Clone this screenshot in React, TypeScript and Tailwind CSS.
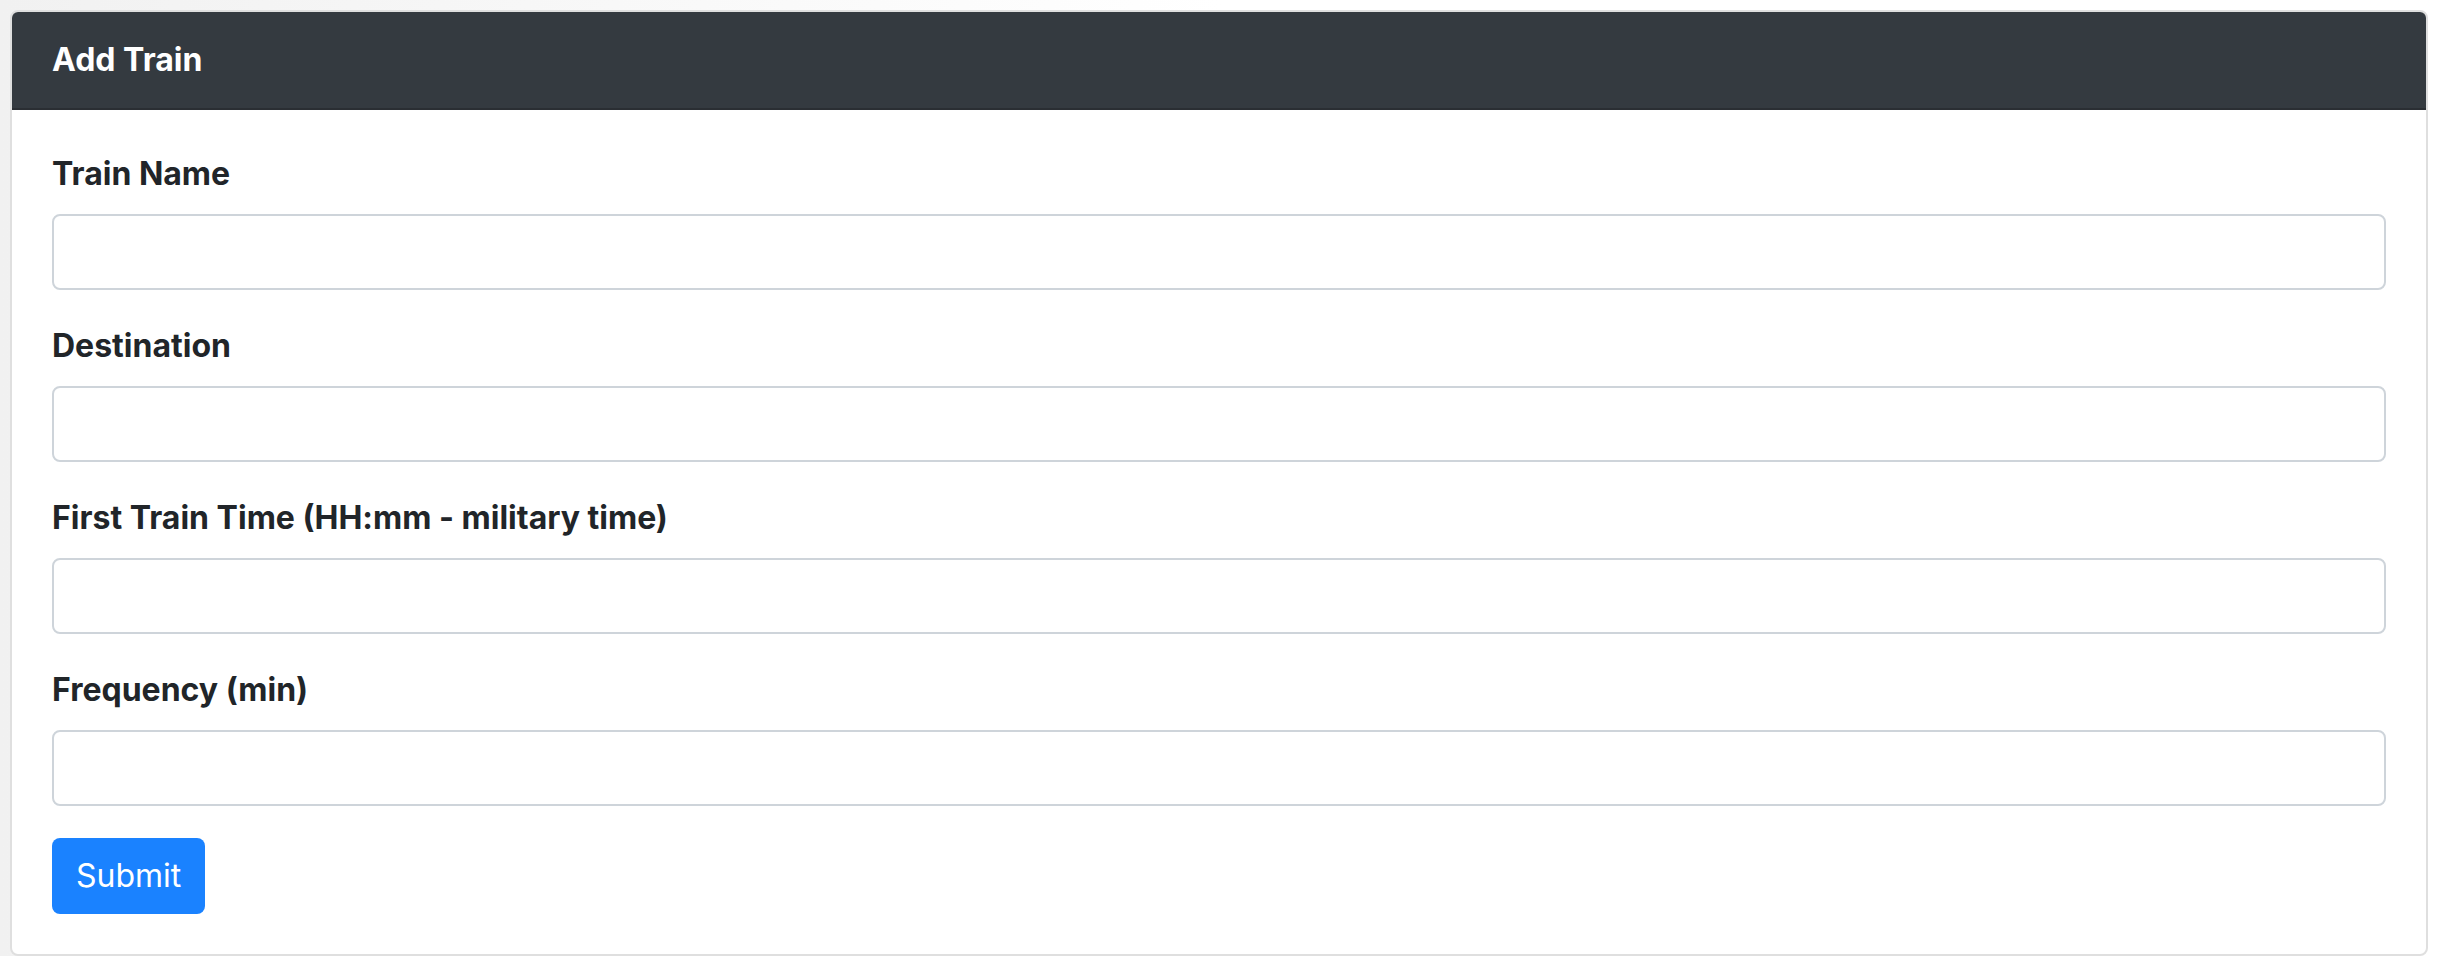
const FIELDS = [
  { id: "train-name", label: "Train Name" },
  { id: "destination", label: "Destination" },
  { id: "first-train", label: "First Train Time (HH:mm - military time)" },
  { id: "frequency", label: "Frequency (min)" },
];

export default function App() {
  return (
    <div
      className="min-h-[956px] bg-gradient-to-r from-[#f1f1f1] via-white to-white pl-[10px] pr-[20px] pt-[10px]"
      style={{ fontFamily: "Inter, 'Noto Sans', Arial, sans-serif" }}
    >
      <div className="overflow-hidden rounded-[8px] border-2 border-[#dfdfdf] bg-white">
        <div className="border-b-2 border-[#2a2e33] bg-[#343a40] px-[40px] py-[24px]">
          <h5 className="text-[32px] font-bold leading-[48px] text-white">Add Train</h5>
        </div>
        <form className="p-[40px]" onSubmit={(e) => e.preventDefault()}>
          {FIELDS.map((f) => (
            <div key={f.id} className="mb-[32px]">
              <label
                htmlFor={f.id}
                className="mb-[16px] block text-[32px] font-bold leading-[48px] text-[#212529]"
              >
                {f.label}
              </label>
              <input
                id={f.id}
                type="text"
                className="block h-[76px] w-full rounded-[8px] border-2 border-[#ced4da] bg-white px-[24px] text-[32px] text-[#495057] outline-none"
              />
            </div>
          ))}
          <button
            type="submit"
            className="h-[76px] rounded-[8px] bg-[#1a82ff] px-[24px] text-[32px] leading-[48px] text-white"
          >
            Submit
          </button>
        </form>
      </div>
    </div>
  );
}
